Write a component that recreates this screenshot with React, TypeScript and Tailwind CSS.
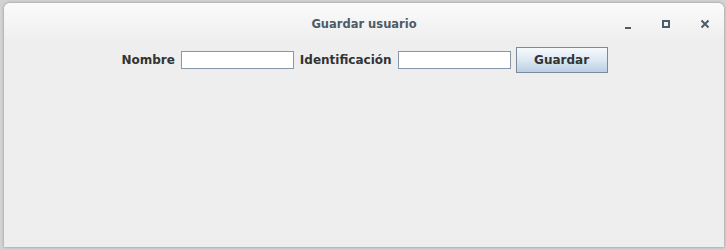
import React from "react"

// Ventana Swing "Guardar usuario" (tema Metal/Ocean) sobre un escritorio gris

function TextField() {
  return (
    <input
      type="text"
      className="h-[18px] w-[113px] border border-[#8596a6] bg-white px-1 text-[12px] outline-none"
    />
  )
}

function WindowControls() {
  return (
    <div className="absolute right-[14px] top-[16px] flex items-center gap-[30px] text-[#4f5b66]">
      <svg width="8" height="10" viewBox="0 0 8 10">
        <rect x="1" y="8" width="6" height="2" fill="currentColor" />
      </svg>
      <svg width="8" height="10" viewBox="0 0 8 10">
        <rect x="1" y="2" width="6" height="6" fill="none" stroke="currentColor" strokeWidth="2" />
      </svg>
      <svg width="10" height="10" viewBox="0 0 10 10">
        <path d="M1.5 1.5 L8.5 8.5 M8.5 1.5 L1.5 8.5" stroke="currentColor" strokeWidth="2" />
      </svg>
    </div>
  )
}

export default function App() {
  return (
    <div
      className="h-[250px] w-[726px] overflow-hidden bg-[#d3d3d3] pl-[4px] pt-[3px]"
      style={{ fontFamily: '"DejaVu Sans", Verdana, sans-serif' }}
    >
      <div className="relative flex h-[244px] w-[720px] flex-col rounded-t-[6px] bg-[#eeeeee] shadow-[0_0_3px_rgba(0,0,0,0.35)]">
        {/* barra de título */}
        <div className="relative flex h-[38px] shrink-0 items-center justify-center rounded-t-[6px] bg-gradient-to-b from-[#fbfbfb] to-[#eeeeee] pt-[5px]">
          <span className="text-[11.5px] font-bold text-[#4f5b66]">Guardar usuario</span>
          <WindowControls />
        </div>

        {/* contenido */}
        <div className="flex items-center justify-center gap-[6px] pt-[6px] pl-[1px] text-[12px] font-bold text-[#333333]">
          <span>Nombre</span>
          <TextField />
          <span>Identificación</span>
          <TextField />
          <button
            type="button"
            className="ml-[-1px] h-[26px] w-[92px] border border-[#7a8a99] bg-gradient-to-b from-[#f6f9fc] via-[#dde8f3] to-[#b9cfe4] text-[12px] font-bold text-[#333333]"
          >
            Guardar
          </button>
        </div>
      </div>
    </div>
  )
}
